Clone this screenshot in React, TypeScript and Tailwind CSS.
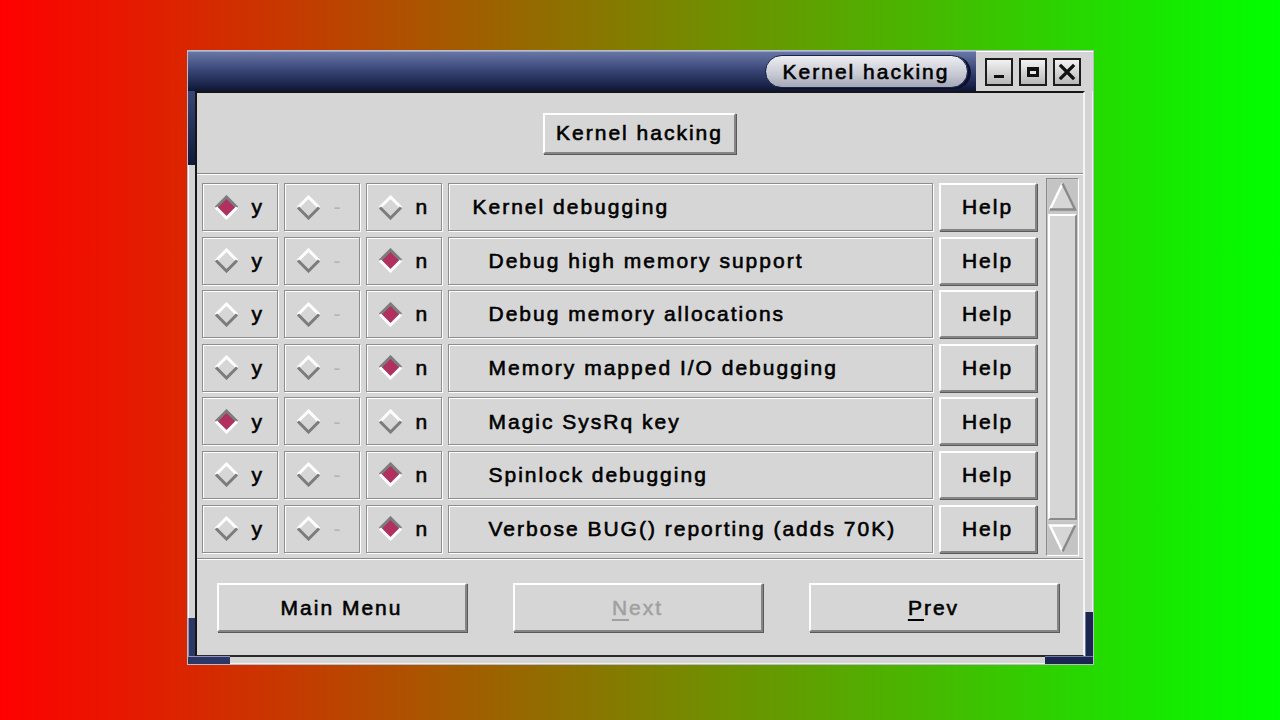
import React from "react";

const FONT = "font-['Liberation_Sans',Arial,sans-serif]";

type Row = { label: string; sel: "y" | "n"; indent: boolean };

const rows: Row[] = [
  { label: "Kernel debugging", sel: "y", indent: false },
  { label: "Debug high memory support", sel: "n", indent: true },
  { label: "Debug memory allocations", sel: "n", indent: true },
  { label: "Memory mapped I/O debugging", sel: "n", indent: true },
  { label: "Magic SysRq key", sel: "y", indent: true },
  { label: "Spinlock debugging", sel: "n", indent: true },
  { label: "Verbose BUG() reporting (adds 70K)", sel: "n", indent: true },
];

function Diamond({ on }: { on: boolean }) {
  return (
    <svg width="25" height="25" viewBox="0 0 25 25" className="shrink-0">
      {on && <polygon points="12.5,2 23,12.5 12.5,23 2,12.5" fill="#b0305f" />}
      <polyline
        points="2,12.5 12.5,2 23,12.5"
        fill="none"
        stroke={on ? "#7c7c7c" : "#ffffff"}
        strokeWidth="3"
        strokeLinejoin="miter"
      />
      <polyline
        points="2,12.5 12.5,23 23,12.5"
        fill="none"
        stroke={on ? "#ffffff" : "#7c7c7c"}
        strokeWidth="3"
        strokeLinejoin="miter"
      />
    </svg>
  );
}

const etched =
  "border border-[#8e8e8e] shadow-[inset_1px_1px_0_#ffffff,1px_1px_0_#ffffff]";
const raised =
  "border-2 border-t-white border-l-white border-b-[#858585] border-r-[#858585] shadow-[1px_1px_0_#5a5a5a]";
const txt = "text-[21px] tracking-[2px] text-black [-webkit-text-stroke:0.6px_#000]";

function ChoiceCell({ letter, on, dim }: { letter: string; on: boolean; dim?: boolean }) {
  return (
    <div className={`w-[76px] h-full flex items-center pl-[11px] gap-[13px] ${etched}`}>
      <Diamond on={on} />
      <span
        className={
          dim
            ? "text-[21px] text-[#b4b4b4]"
            : "text-[21px] text-black [-webkit-text-stroke:0.6px_#000]"
        }
      >
        {letter}
      </span>
    </div>
  );
}

function Scrollbar() {
  return (
    <div className="w-[33px] flex flex-col border border-t-[#8a8a8a] border-l-[#8a8a8a] border-b-white border-r-white bg-[#c9c9c9] p-[1px] gap-[2px]">
      <div className="h-[32px] flex items-center justify-center bg-[#c4c4c4]">
        <svg width="30" height="31" viewBox="0 0 30 31">
          <polygon points="15,2 28,29 2,29" fill="#d6d6d6" />
          <polyline points="2,29 15,2" stroke="#ffffff" strokeWidth="2.5" fill="none" />
          <polyline points="15,2 28,29 2,29" stroke="#8a8a8a" strokeWidth="2.5" fill="none" />
        </svg>
      </div>
      <div className="flex-1 bg-[#d6d6d6] border-2 border-t-white border-l-white border-b-[#8a8a8a] border-r-[#8a8a8a]" />
      <div className="h-[32px] flex items-center justify-center bg-[#c4c4c4]">
        <svg width="30" height="31" viewBox="0 0 30 31">
          <polygon points="2,2 28,2 15,29" fill="#d6d6d6" />
          <polyline points="15,29 2,2 28,2" stroke="#ffffff" strokeWidth="2.5" fill="none" />
          <polyline points="28,2 15,29" stroke="#8a8a8a" strokeWidth="2.5" fill="none" />
        </svg>
      </div>
    </div>
  );
}

function WinButton({ kind }: { kind: "min" | "max" | "close" }) {
  return (
    <div className="w-[28px] h-[28px] border-2 border-[#1c1c1c] bg-[linear-gradient(to_bottom,#f2f2f2,#b8b8b8)] flex items-center justify-center">
      <svg width="20" height="20" viewBox="0 0 20 20">
        {kind === "min" && <rect x="5" y="13" width="10" height="3" fill="#111" />}
        {kind === "max" && (
          <>
            <rect x="4" y="5" width="12" height="10" fill="#111" />
            <rect x="7" y="9" width="6" height="3" fill="#e6e6e6" />
          </>
        )}
        {kind === "close" && (
          <path d="M4 4 L16 16 M16 4 L4 16" stroke="#111" strokeWidth="3.2" strokeLinecap="square" />
        )}
      </svg>
    </div>
  );
}

function BigButton({ children, disabled }: { children: React.ReactNode; disabled?: boolean }) {
  return (
    <div
      className={`w-[250px] h-[49px] flex items-center justify-center bg-[#d6d6d6] ${raised} ${
        disabled ? "text-[21px] tracking-[2px] text-[#a0a0a0] [-webkit-text-stroke:0.5px_#a0a0a0]" : txt
      }`}
    >
      {children}
    </div>
  );
}

const navy = "bg-[linear-gradient(to_bottom,#3a4677,#101938)]";

export default function App() {
  return (
    <div
      className={`w-[1280px] h-[720px] overflow-hidden bg-[linear-gradient(to_right,#ff0000,#00ff00)] pt-[50px] ${FONT}`}
    >
      <div className="relative w-[907px] h-[615px] mx-auto border border-[#b8bccb] bg-[#d2d2d2] flex flex-col">
        {/* Title bar */}
        <div className="h-[40px] flex shrink-0">
          <div className="flex-1 bg-[linear-gradient(to_bottom,#6876a6,#3a4778_45%,#0e1636)] border-t border-[#9aa4c8] flex items-start justify-end pt-[3px] pr-[8px]">
            <div className="h-[33px] w-[203px] rounded-full border border-[#1a2246] bg-[linear-gradient(to_bottom,#eeeef2,#c6c8d2_60%,#a4a8b6)] shadow-[3px_1px_0_#0a1230] flex items-center justify-center">
              <span className={txt + " tracking-[1.4px]"}>Kernel hacking</span>
            </div>
          </div>
          <div className="w-[117px] flex items-start gap-[6px] pl-[9px] pt-[6px] bg-[#d4d4d4] border-t border-white">
            <WinButton kind="min" />
            <WinButton kind="max" />
            <WinButton kind="close" />
          </div>
        </div>

        {/* Body */}
        <div className="flex-1 flex">
          <div className="w-[7px] bg-[#d4d4d4] border-l border-white" />
          <div className="flex-1 flex flex-col bg-[#d6d6d6] border-t-2 border-l-2 border-[#151515] border-b-2 border-b-[#2a2a2a] border-r-2 border-r-[#f4f4f4]">
            {/* header */}
            <div className="h-[80px] flex items-center justify-center shrink-0">
              <div className={`w-[193px] h-[41px] flex items-center justify-center ${raised} ${txt} tracking-[1.4px]`}>
                Kernel hacking
              </div>
            </div>
            <div className="h-[2px] border-t border-[#8a8a8a] border-b border-b-white" />
            {/* list */}
            <div className="flex-1 flex pl-[5px] pr-[4px] pt-[3px] pb-[2px] gap-[9px]">
              <div className="flex-1 flex flex-col gap-[5.6px] pt-[5px]">
                {rows.map((r) => (
                  <div key={r.label} className="h-[48px] flex gap-[6px]">
                    <ChoiceCell letter="y" on={r.sel === "y"} />
                    <ChoiceCell letter="-" on={false} dim />
                    <ChoiceCell letter="n" on={r.sel === "n"} />
                    <div
                      className={`flex-1 h-full flex items-center ${etched} ${
                        r.indent ? "pl-[40px]" : "pl-[24px]"
                      } ${txt}`}
                    >
                      {r.label}
                    </div>
                    <div className={`w-[98px] h-full flex items-center justify-center ${raised} ${txt}`}>
                      Help
                    </div>
                  </div>
                ))}
              </div>
              <Scrollbar />
            </div>
            <div className="h-[2px] border-t border-[#8a8a8a] border-b border-b-white" />
            {/* footer */}
            <div className="h-[95px] flex items-center justify-between pl-[20px] pr-[24px] shrink-0">
              <BigButton>Main Menu</BigButton>
              <BigButton disabled>
                <span className="underline underline-offset-4">N</span>ext
              </BigButton>
              <BigButton>
                <span className="underline underline-offset-4">P</span>rev
              </BigButton>
            </div>
          </div>
          <div className="w-[8px] bg-[#d4d4d4] border-r border-[#f0f0f0]" />
        </div>
        <div className="h-[7px] bg-[#d4d4d4] border-b border-[#f0f0f0] shrink-0" />

        {/* decorative navy frame corners */}
        <div className={`absolute left-0 top-[40px] w-[7px] h-[74px] ${navy}`} />
        <div className="absolute left-0 bottom-0 w-[7px] h-[46px] bg-[#2c3766] border-l border-[#8a94ba]" />
        <div className="absolute left-0 bottom-0 w-[42px] h-[8px] bg-[#2c3766] border-t border-[#8a94ba]" />
        <div className="absolute right-0 bottom-0 w-[8px] h-[52px] bg-[#1c2550] border-l border-[#6a76a4]" />
        <div className="absolute right-0 bottom-0 w-[48px] h-[8px] bg-[#1c2550] border-t border-[#6a76a4]" />
      </div>
    </div>
  );
}
